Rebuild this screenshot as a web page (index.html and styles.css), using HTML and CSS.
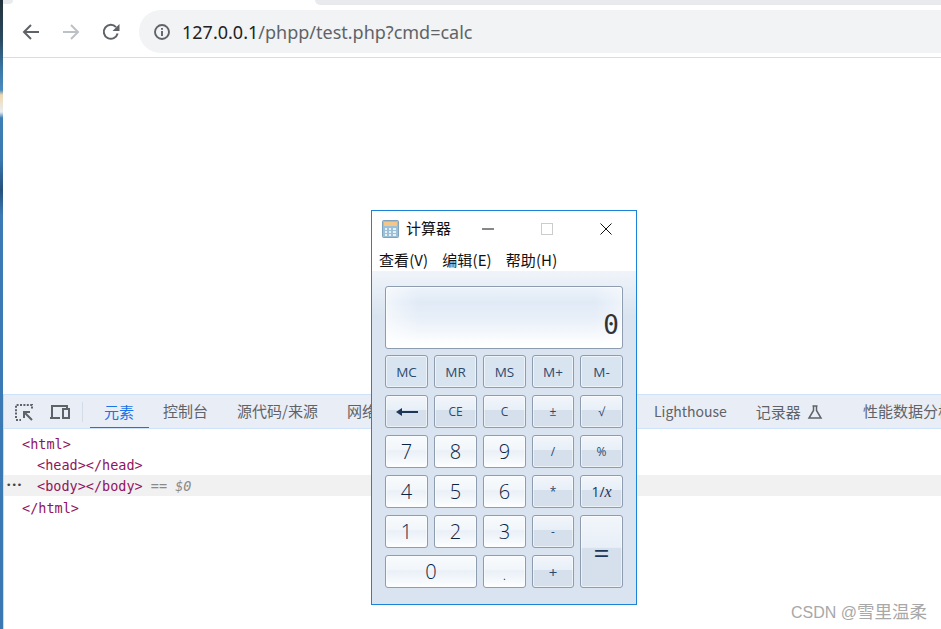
FILE: index.html
```html
<!DOCTYPE html>
<html lang="zh-CN">
<head>
<meta charset="utf-8">
<title>计算器</title>
<link rel="stylesheet" href="styles.css">
</head>
<body>
<div class="strip"></div>
<div class="browser">
  <div class="toolbar">
    <span class="corner"></span>
    <span class="tabedge"></span>
    <button class="navbtn"><svg width="20" height="20" viewBox="0 0 20 20"><path d="M18 10H3M10 3l-7 7 7 7" fill="none" stroke="#5f6368" stroke-width="2"/></svg></button>
    <button class="navbtn"><svg width="20" height="20" viewBox="0 0 20 20"><path d="M2 10h15M10 3l7 7-7 7" fill="none" stroke="#bdc1c6" stroke-width="2"/></svg></button>
    <button class="navbtn"><svg width="20" height="20" viewBox="0 0 20 20"><path d="M16.600 11.500a7 7 0 1 1-1.600-6.400" fill="none" stroke="#5f6368" stroke-width="2"/><path d="M18.500 2v7h-7z" fill="#5f6368"/></svg></button>
    <div class="omnibox">
      <svg width="18" height="18" viewBox="0 0 18 18"><circle cx="9" cy="9" r="7" fill="none" stroke="#5f6368" stroke-width="1.900"/><path d="M9 8v5M9 5v1.800" stroke="#5f6368" stroke-width="1.900"/></svg>
      <span class="url"><span class="host">127.0.0.1</span>/phpp/test.php?cmd=calc</span>
    </div>
  </div>
  <div class="viewport"></div>
  <div class="devtools">
    <div class="dt-bar">
      <svg class="dt-ico" width="22" height="20" viewBox="0 0 22 20"><path d="M2 16V3h16v5" fill="none" stroke="#5f6368" stroke-width="2" stroke-dasharray="2 1.400"/><path d="M2 18h5" stroke="#5f6368" stroke-width="2" stroke-dasharray="2 1.400"/><path d="M18 18l-7-7M10 16v-6h6" fill="none" stroke="#5f6368" stroke-width="2"/></svg>
      <svg class="dt-ico" width="22" height="20" viewBox="0 0 22 20"><path d="M1 16h10M3 15V4h15v2" fill="none" stroke="#5f6368" stroke-width="2"/><rect x="14" y="7" width="6" height="9" fill="none" stroke="#5f6368" stroke-width="2"/></svg>
      <span class="dt-sep"></span>
      <span class="tab active">元素</span>
      <span class="tab">控制台</span>
      <span class="tab">源代码/来源</span>
      <span class="tab">网络</span>
      <span class="tab-gap"></span>
      <span class="tab tab-latin">Lighthouse</span>
      <span class="tab tab-flask">记录器<svg width="16" height="16" viewBox="0 0 16 16"><path d="M5.500 2h5M6.500 2v4.500L2 14h12L9.500 6.500V2" fill="none" stroke="#5f6368" stroke-width="1.500"/></svg></span>
      <span class="tab">性能数据分析</span>
    </div>
    <div class="tree">
      <div class="row"><span class="tag">&lt;html&gt;</span></div>
      <div class="row in"><span class="tag">&lt;head&gt;&lt;/head&gt;</span></div>
      <div class="row in sel"><span class="dots">•••</span><span class="tag">&lt;body&gt;&lt;/body&gt;</span><span class="eq"> == $0</span></div>
      <div class="row last"><span class="tag">&lt;/html&gt;</span></div>
    </div>
  </div>
</div>

<div class="calc">
  <div class="titlebar">
    <svg width="17" height="18" viewBox="0 0 17 18"><rect x=".5" y=".5" width="16" height="17" rx="1" fill="#9cc0d8" stroke="#7fa3bd"/><rect x="2" y="2" width="13" height="4" fill="#f3c68a"/><path d="M3 8h2v2H3zM7 8h2v2H7zM11 8h3v2h-3zM3 11h2v2H3zM7 11h2v2H7zM11 11h3v2h-3zM3 14h2v2H3zM7 14h2v2H7zM11 14h3v2h-3z" fill="#e8f1f7"/></svg>
    <span class="title">计算器</span>
    <span class="winbtns">
      <svg width="14" height="14" viewBox="0 0 14 14"><path d="M1 7h12" stroke="#111"/></svg>
      <svg width="14" height="14" viewBox="0 0 14 14"><rect x="1.500" y="1.500" width="11" height="11" fill="none" stroke="#ccc"/></svg>
      <svg width="14" height="14" viewBox="0 0 14 14"><path d="M1.500 1.500l11 11M12.500 1.500l-11 11" stroke="#111"/></svg>
    </span>
  </div>
  <div class="menu"><span>查看(V)</span><span>编辑(E)</span><span>帮助(H)</span></div>
  <div class="body">
    <div class="display">0</div>
    <div class="keys">
      <button class="key mem">MC</button><button class="key mem">MR</button><button class="key mem">MS</button><button class="key mem">M+</button><button class="key mem">M-</button>
      <button class="key op"><svg width="22" height="10" viewBox="0 0 22 10"><path d="M5 5h17" stroke="#1d3557" stroke-width="2"/><path d="M0 5l6-4v8z" fill="#1d3557"/></svg></button><button class="key op sm">CE</button><button class="key op sm">C</button><button class="key op sm">±</button><button class="key op sm">√</button>
      <button class="key num">7</button><button class="key num">8</button><button class="key num">9</button><button class="key op sm">/</button><button class="key op sm">%</button>
      <button class="key num">4</button><button class="key num">5</button><button class="key num">6</button><button class="key op sm">*</button><button class="key op inv">1/<i>x</i></button>
      <button class="key num">1</button><button class="key num">2</button><button class="key num">3</button><button class="key op sm">-</button><button class="key op equals">=</button>
      <button class="key num zero">0</button><button class="key num dot">.</button><button class="key op sm plus">+</button>
    </div>
  </div>
</div>
<div class="mark">CSDN @<span class="mark-cjk">雪里温柔</span></div>
</body>
</html>
```
FILE: styles.css
```css
* { box-sizing: border-box; }
html, body { margin: 0; height: 629px; overflow: hidden; background: #fff; }
body { display: flex; font-family: "Noto Sans CJK SC", "Noto Sans", sans-serif; position: relative; }
button { font: inherit; padding: 0; }

.strip { width: 3px; flex: none; background: linear-gradient(#22313b 0, #2b4a60 40px, #3a78a8 70px, #4a8bbd 90px, #f0d8b0 95px, #e9eef2 112px, #3d7fb5 118px, #3a78b0 160px, #27507c 190px, #3b7ab5 215px, #3a78b4 100%); }
.browser { flex: 1; min-width: 0; display: flex; flex-direction: column; }

.toolbar { height: 58px; flex: none; display: flex; align-items: flex-start; padding: 10px 0 0 8px; border-bottom: 1px solid #dadce0; position: relative; }
.corner { position: absolute; left: 0; top: 0; width: 10px; height: 4px; background: #e8eaed; border-bottom-right-radius: 6px; }
.tabedge { position: absolute; left: 312px; right: 0; top: 0; height: 5px; background: #e8eaed; border-bottom-left-radius: 6px; }
.navbtn { width: 40px; height: 43px; border: 0; background: none; display: flex; align-items: center; justify-content: center; }
.omnibox { margin-left: 8px; height: 43px; flex: 1; margin-right: -30px; border-radius: 22px; background: #f1f3f4; display: flex; align-items: center; gap: 11px; padding-left: 14px; }
.url { font-size: 18px; color: #5f6368; font-family: "Noto Sans", sans-serif; white-space: nowrap; }
.host { color: #202124; }

.viewport { flex: 1; }

.devtools { height: 235px; flex: none; border-left: 1px solid #c5dcf7; border-top: 1px solid #cfe2fb; }
.dt-bar { height: 34px; display: flex; align-items: center; background: #e9edf5; border-bottom: 1px solid #cfe2fb; padding-left: 10px; white-space: nowrap; overflow: hidden; }
.dt-ico { margin-right: 13px; flex: none; }
.dt-sep { width: 1px; height: 20px; background: #d3dbe6; margin: 0 7px 0 -2px; flex: none; }
.tab { font-size: 15px; color: #5f6368; padding: 0 15px 0 14px; height: 33px; line-height: 32px; flex: none; position: relative; }
.tab.active { color: #1a73e8; border-bottom: 2px solid #1a73e8; margin-top: 1px; height: 33px; }
.tab-gap { width: 248px; flex: none; }
.tab-latin { font-size: 14px; }
.tab-flask { display: flex; align-items: center; gap: 6px; padding-right: 26px; }

.tree { font: 13.500px/23px "DejaVu Sans Mono", monospace; padding-top: 4px; }
.row { height: 21px; padding-left: 18px; white-space: pre; color: #881280; position: relative; }
.row.in { padding-left: 33px; }
.row.last { margin-top: 1px; }
.row.sel { background: #f1f1f1; }
.tag { color: #8f1360; }
.eq { color: #8a8a8a; font-style: italic; }
.dots { position: absolute; left: 2px; top: -1px; font-size: 9px; color: #444; }

.calc { position: absolute; left: 371px; top: 210px; width: 266px; height: 395px; border: 1px solid #1b84d8; background: #fff; display: flex; flex-direction: column; }
.titlebar { height: 36px; flex: none; display: flex; align-items: center; padding-left: 10px; }
.title { font-size: 15px; line-height: 20px; margin: -2px 0 0 7px; color: #111; }
.winbtns { margin-left: 30px; display: flex; gap: 45px; }
.menu { height: 24px; flex: none; display: flex; gap: 14px; padding-left: 7px; font-size: 15px; letter-spacing: .1px; line-height: 25px; color: #111; }
.body { flex: 1; padding: 15px 13px 0; background: linear-gradient(#f0f4fa 0, #d9e4f0 45px); }
.display { height: 63px; border: 1px solid #8e9cb0; border-radius: 3px; background: linear-gradient(90deg, rgba(255,255,255,.55), rgba(255,255,255,0) 14%, rgba(255,255,255,0) 88%, rgba(255,255,255,.45)), linear-gradient(#edf3fa, #e0eaf6 25%, #e8eff8 50%, #fdfeff 92%); box-shadow: inset 0 0 0 1px rgba(255,255,255,.6); text-align: right; font: 26px/77px "DejaVu Sans Mono", monospace; padding-right: 3px; color: #333; }
.keys { margin-top: 6px; display: grid; grid-template-columns: 43px 43px 43px 42px 43px; grid-auto-rows: 33px; column-gap: 6px; row-gap: 7px; }
.key { border: 1px solid #8e9cb0; border-radius: 3px; color: #1d3557; display: flex; align-items: center; justify-content: center; box-shadow: inset 0 0 0 1px rgba(255,255,255,.55); font-family: "Open Sans", sans-serif; }
.mem { background: #d9e4f1; font-size: 13.500px; color: #2d4a6e; }
.op { background: linear-gradient(#f2f6fb 0, #e8eff7 44%, #d5e0ec 46%, #d5e0ec 100%); }
.num { background: linear-gradient(#f9fbfd 0, #f2f6fa 44%, #e9f0f7 48%, #fdfeff 100%); font-size: 20px; font-weight: 300; color: #0c2444; }
.sm { font-size: 12px; color: #2d4a6e; }
.plus { font-size: 15px; }
.inv { font-size: 14px; }
.inv i { font-family: "Liberation Serif", serif; font-size: 16px; }
.zero { grid-column: span 2; grid-row: 6; }
.dot { grid-column: 3; grid-row: 6; font-size: 14px; padding-top: 6px; }
.equals { grid-column: 5; grid-row: 5 / span 2; font-size: 28px; font-weight: 400; }

.mark { position: absolute; right: 14px; bottom: 6px; font: 16px "Liberation Sans", sans-serif; color: #a8a8a8; }
.mark-cjk { font: 17.500px "Noto Sans CJK SC", sans-serif; }
```
